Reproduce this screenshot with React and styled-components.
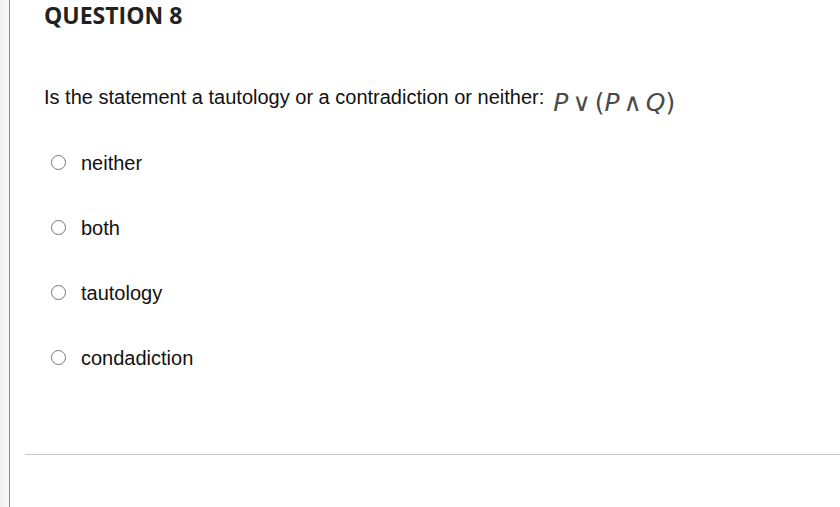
import React from "react";
import styled, { createGlobalStyle } from "styled-components";

const Global = createGlobalStyle`
  html, body { margin: 0; padding: 0; background: #fff; }
  body { font-family: "Liberation Sans", Arial, sans-serif; }
`;

const Page = styled.div`
  display: flex;
  width: 840px;
  height: 507px;
  overflow: hidden;
`;

const Gutter = styled.div`
  width: 9px;
  flex: none;
  background: linear-gradient(to right, #f0f0f0, #fafafa);
  border-right: 1px solid #8c8c8c;
`;

const Main = styled.div`
  flex: 1;
  display: flex;
  flex-direction: column;
  padding-left: 15px;
`;

const Inner = styled.div`
  padding-left: 19px;
  display: flex;
  flex-direction: column;
`;

const Title = styled.h2`
  margin: 0;
  padding-top: 1px;
  font-family: "Open Sans", sans-serif;
  font-weight: 700;
  font-size: 23px;
  line-height: 28px;
  color: #222;
`;

const Prompt = styled.div`
  margin-top: 55px;
  font-size: 20px;
  line-height: 24px;
  color: #111;
  display: flex;
  align-items: baseline;
`;

const Formula = styled.span`
  margin-left: 9px;
  font-family: "DejaVu Sans", sans-serif;
  font-size: 25px;
  color: #4a4a4a;
  position: relative;
  top: 7px;
`;

const Italic = styled.i`
  font-style: italic;
`;

const Op = styled.span`
  font-style: normal;
  margin: 0 4px;
`;

const Options = styled.div`
  margin-top: 42px;
  display: flex;
  flex-direction: column;
  gap: 41px;
  padding-left: 7px;
`;

const Option = styled.label`
  display: flex;
  align-items: center;
  height: 24px;
  font-size: 20px;
  color: #111;
`;

const Radio = styled.span`
  box-sizing: border-box;
  width: 15px;
  height: 15px;
  border: 1.5px solid #767676;
  border-radius: 50%;
  margin-right: 15px;
  flex: none;
  position: relative;
  top: -1px;
`;

const Rule = styled.hr`
  margin: 0;
  margin-top: auto;
  margin-bottom: 52px;
  border: none;
  border-top: 1px solid #c8c8c8;
  height: 0;
`;

const options = ["neither", "both", "tautology", "condadiction"];

export default function App() {
  return (
    <>
      <Global />
      <Page>
        <Gutter />
        <Main>
          <Inner>
            <Title>QUESTION 8</Title>
            <Prompt>
              Is the statement a tautology or a contradiction or neither:
              <Formula>
                <Italic>P</Italic>
                <Op>∨</Op>(<Italic>P</Italic>
                <Op>∧</Op>
                <Italic>Q</Italic>)
              </Formula>
            </Prompt>
            <Options>
              {options.map((o) => (
                <Option key={o}>
                  <Radio />
                  {o}
                </Option>
              ))}
            </Options>
          </Inner>
          <Rule />
        </Main>
      </Page>
    </>
  );
}
